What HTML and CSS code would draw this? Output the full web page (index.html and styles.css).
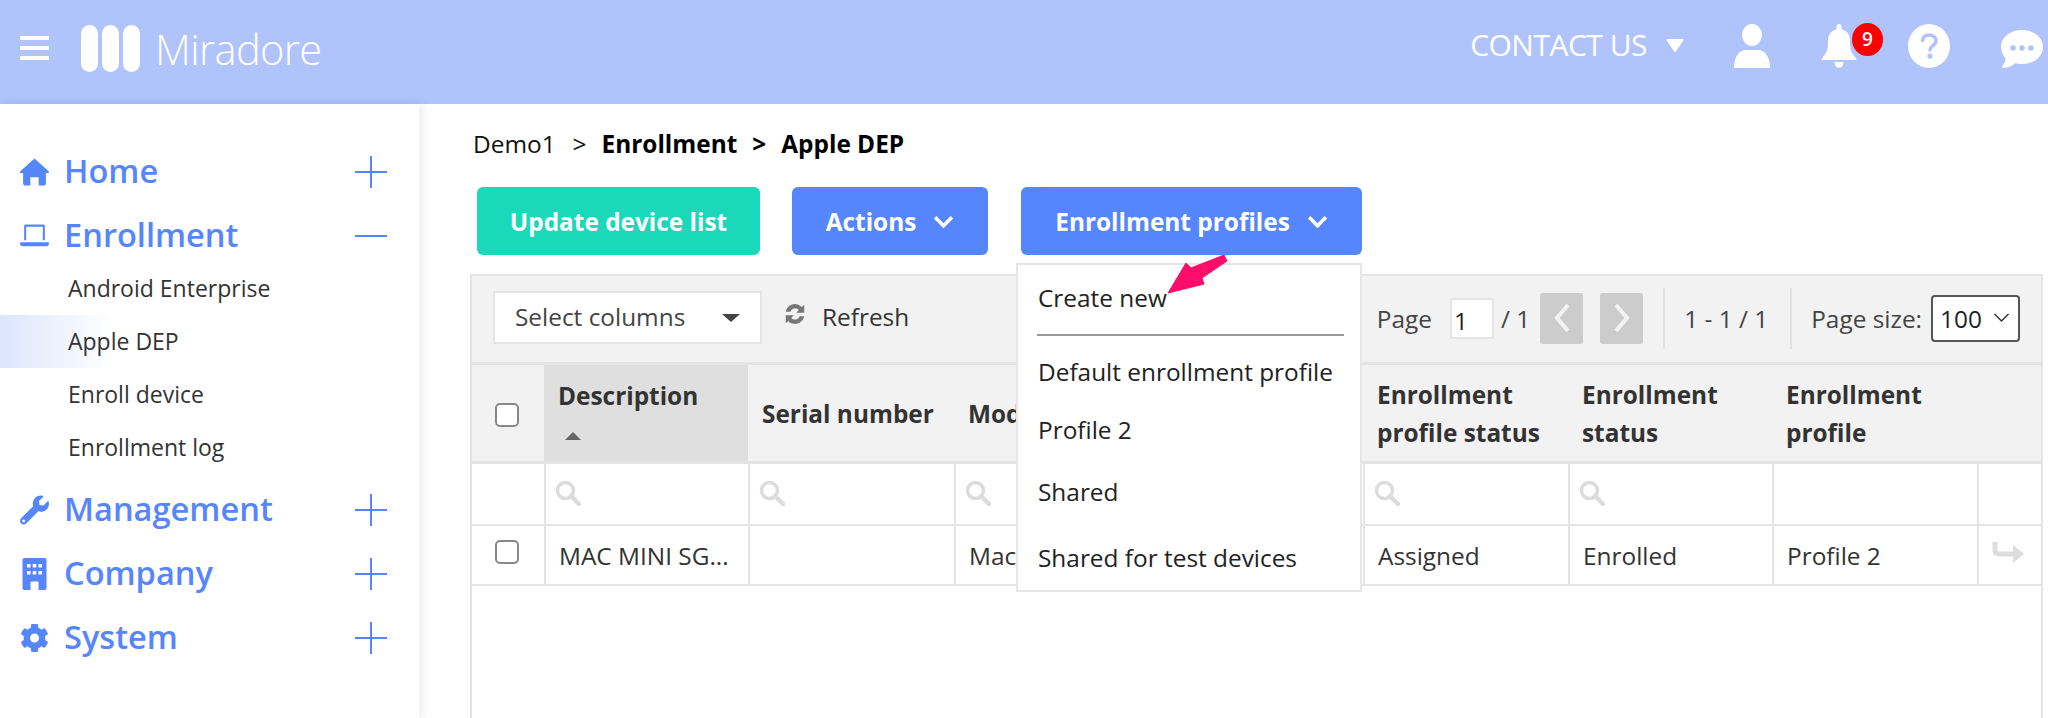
FILE: index.html
```html
<!DOCTYPE html>
<html lang="en">
<head>
<meta charset="utf-8">
<title>Miradore - Apple DEP</title>
<link rel="stylesheet" href="styles.css">
</head>
<body>
<header class="topbar">
  <div class="hamburger"><span></span><span></span><span></span></div>
  <div class="logo-mark"><span></span><span></span><span></span></div>
  <div class="logo-text">Miradore</div>
  <div class="top-right">
    <div class="contact">CONTACT US</div>
    <svg class="caret-top" viewBox="0 0 18 14"><path d="M1.500 1h15L9 12z" fill="#fff" stroke="#fff" stroke-width="2" stroke-linejoin="round"/></svg>
    <svg class="ic-user" viewBox="0 0 36 44"><ellipse cx="18" cy="11" rx="10" ry="11" fill="#fff"/><path d="M0 44c0-2 0-4 .5-6C2 31 6 26 12 26h12c6 0 10 5 11.500 12 .5 2 .5 4 .5 6z" fill="#fff"/></svg>
    <div class="bell-wrap">
      <svg class="ic-bell" viewBox="0 0 36 44"><path d="M18 0c1.500 0 2.500 1 2.500 2.500v2.700C26 6.500 29 11 29 17c0 8 1 11 3.500 14 1 1.200 3 3.500 3 5H.5c0-1.500 2-3.800 3-5C6 28 7 25 7 17 7 11 10 6.500 15.500 5.200V2.500C15.500 1 16.500 0 18 0zM13.500 38h9c0 3-2 6-4.500 6s-4.500-3-4.500-6z" fill="#fff"/></svg>
      <span class="badge">9</span>
    </div>
    <svg class="ic-help" viewBox="0 0 42 44"><ellipse cx="21" cy="22" rx="21" ry="22" fill="#fff"/><path d="M14.500 16.500c.5-3.500 3-5.500 6.500-5.500 4 0 7 2.300 7 5.700 0 4.800-6 5-6 9.300" fill="none" stroke="#b0c4fb" stroke-width="3.500" stroke-linecap="round"/><circle cx="22" cy="32" r="2.600" fill="#b0c4fb"/></svg>
    <svg class="ic-chat" viewBox="0 0 42 38"><path d="M21 0c11.500 0 21 7 21 17s-9.500 17-21 17c-2.500 0-4.500-.3-6.500-1C12 35.500 7 38 2 38c-1 0-1.300-.8-.8-1.500C3 34 4.500 31 4.600 28.500 1.800 25.500 0 21.500 0 17 0 7 9.500 0 21 0z" fill="#fff"/><circle cx="12" cy="18" r="2.800" fill="#b0c4fb"/><circle cx="21" cy="18" r="2.800" fill="#b0c4fb"/><circle cx="30" cy="18" r="2.800" fill="#b0c4fb"/></svg>
  </div>
</header>

<div class="layout">
  <nav class="sidebar">
    <div class="nav-head">
      <svg class="nav-icon" viewBox="0 0 28 26"><path d="M14 0l13.700 12.300c.6.600.2 1.700-.7 1.700h-2v10c0 1.200-.8 2-2 2h-5v-8h-8v8H5c-1.200 0-2-.8-2-2V14H1c-.9 0-1.300-1.100-.7-1.700z"/></svg>
      <span class="nav-label">Home</span>
      <svg class="nav-toggle" viewBox="0 0 32 32"><path d="M0 16h32M16 0v32"/></svg>
    </div>
    <div class="nav-head">
      <svg class="nav-icon" viewBox="0 0 28 24"><path d="M4 2.500c0-1 .5-1.500 1.500-1.500h17c1 0 1.500.5 1.500 1.500V16h-2V3H6v13H4z"/><path d="M1 18h26c.6 0 1 .4 1 1 0 2-1 3-3 3H3c-2 0-3-1-3-3 0-.6.4-1 1-1z"/></svg>
      <span class="nav-label">Enrollment</span>
      <svg class="nav-toggle" viewBox="0 0 32 32"><path d="M0 16h32"/></svg>
    </div>
    <div class="nav-subs">
      <div class="nav-sub">Android Enterprise</div>
      <div class="nav-sub nav-sub-active">Apple DEP</div>
      <div class="nav-sub">Enroll device</div>
      <div class="nav-sub">Enrollment log</div>
    </div>
    <div class="nav-head">
      <svg class="nav-icon" viewBox="0 0 512 512"><path d="M507.730 109.100c-2.240-9.030-13.540-12.090-20.120-5.510l-74.360 74.360-67.880-11.310-11.310-67.880 74.360-74.360c6.620-6.620 3.430-17.900-5.660-20.160-47.380-11.740-99.550.91-136.580 37.930-39.640 39.640-50.550 97.100-34.050 147.200L18.740 402.760c-24.990 24.990-24.990 65.510 0 90.500 24.990 24.990 65.510 24.990 90.500 0l213.210-213.210c50.120 16.710 107.470 5.680 147.370-34.220 37.070-37.070 49.700-89.320 37.910-136.730zM64 472c-13.250 0-24-10.750-24-24 0-13.260 10.750-24 24-24s24 10.740 24 24c0 13.250-10.750 24-24 24z"/></svg>
      <span class="nav-label">Management</span>
      <svg class="nav-toggle" viewBox="0 0 32 32"><path d="M0 16h32M16 0v32"/></svg>
    </div>
    <div class="nav-head">
      <svg class="nav-icon" viewBox="0 0 24 32"><path fill-rule="evenodd" d="M2 0h20c1.200 0 2 .8 2 2v28c0 1.200-.8 2-2 2h-6v-7c0-1-.5-1.500-1.500-1.500h-5C8.500 23.500 8 24 8 25v7H2c-1.200 0-2-.8-2-2V2C0 .8.800 0 2 0zM4.500 6v3.500H8V6zm5.700 0v3.500h3.600V6zM16 6v3.500h3.500V6zM4.500 13v3.500H8V13zm5.700 0v3.500h3.600V13zM16 13v3.500h3.500V13z"/></svg>
      <span class="nav-label">Company</span>
      <svg class="nav-toggle" viewBox="0 0 32 32"><path d="M0 16h32M16 0v32"/></svg>
    </div>
    <div class="nav-head">
      <svg class="nav-icon" viewBox="0 0 512 512"><path d="M487.400 315.700l-42.600-24.600c4.300-23.200 4.300-47 0-70.200l42.600-24.600c4.900-2.800 7.100-8.600 5.500-14-11.100-35.600-30-67.800-54.700-94.600-3.800-4.100-10-5.100-14.800-2.300L380.800 110c-17.900-15.400-38.500-27.300-60.800-35.100V25.800c0-5.600-3.900-10.500-9.400-11.700-36.700-8.200-74.300-7.800-109.200 0-5.500 1.200-9.400 6.100-9.400 11.700V75c-22.200 7.900-42.800 19.800-60.800 35.100L88.700 85.500c-4.900-2.800-11-1.900-14.800 2.300-24.700 26.700-43.600 58.900-54.700 94.600-1.700 5.400.6 11.200 5.500 14L67.300 221c-4.300 23.200-4.300 47 0 70.200l-42.600 24.600c-4.900 2.800-7.100 8.600-5.500 14 11.100 35.600 30 67.800 54.700 94.600 3.800 4.100 10 5.100 14.800 2.300l42.600-24.600c17.900 15.400 38.500 27.300 60.800 35.100v49.200c0 5.600 3.900 10.500 9.400 11.700 36.700 8.200 74.300 7.800 109.200 0 5.500-1.200 9.400-6.100 9.400-11.700v-49.200c22.200-7.900 42.800-19.800 60.800-35.100l42.600 24.600c4.900 2.800 11 1.900 14.800-2.300 24.700-26.700 43.600-58.900 54.700-94.600 1.500-5.500-.7-11.300-5.600-14.100zM256 336c-44.100 0-80-35.900-80-80s35.900-80 80-80 80 35.900 80 80-35.900 80-80 80z"/></svg>
      <span class="nav-label">System</span>
      <svg class="nav-toggle" viewBox="0 0 32 32"><path d="M0 16h32M16 0v32"/></svg>
    </div>
  </nav>

  <main class="main">
    <div class="crumbs">
      <span>Demo1</span><span class="crumb-sep crumb-sep-first">&gt;</span><b>Enrollment</b><b class="crumb-sep">&gt;</b><b>Apple DEP</b>
    </div>
    <div class="actions">
      <button class="btn btn-green">Update device list</button>
      <button class="btn btn-blue btn-actions">Actions
        <svg class="chev" viewBox="0 0 20 12"><path d="M2 2l8 8 8-8"/></svg>
      </button>
      <div class="dropdown-wrap">
        <button class="btn btn-blue btn-profiles">Enrollment profiles
          <svg class="chev" viewBox="0 0 20 12"><path d="M2 2l8 8 8-8"/></svg>
        </button>
        <div class="menu">
          <div class="menu-create">Create new</div>
          <div class="menu-rule"></div>
          <div class="menu-item menu-default">Default enrollment profile</div>
          <div class="menu-item menu-p2">Profile 2</div>
          <div class="menu-item menu-shared">Shared</div>
          <div class="menu-item menu-test">Shared for test devices</div>
        </div>
        <svg class="pointer" viewBox="0 0 62 40"><path d="M58 1l3 6-25 17 2 6L2 39l18-30 5 5z" fill="#ff0d6a" stroke="#ff0d6a" stroke-width="1"/></svg>
      </div>
    </div>

    <section class="grid-frame">
      <div class="toolbar">
        <div class="col-select"><span>Select columns</span><i class="select-caret"></i></div>
        <svg class="ic-refresh" viewBox="2 1.500 18 19"><path d="M3 9C4 4.500 8 2 12 2.500c2 .3 3.500 1 4.800 2.500L19 3v7h-7l2.300-2.500C13 6.300 11.500 6 10 6.300 8.500 6.600 7.500 7.800 7 9zM19 13c-1 4.500-5 7-9 6.500-2-.3-3.500-1-4.800-2.500L3 19v-7h7l-2.300 2.500c1.300 1.200 2.800 1.500 4.300 1.200 1.500-.3 2.500-1.500 3-2.700z" fill="#777"/></svg>
        <span class="refresh">Refresh</span>
        <div class="pager">
          <span>Page</span>
          <span class="page-input">1</span>
          <span>/ 1</span>
          <span class="page-btn page-prev"><svg viewBox="0 0 20 32"><path d="M16 3L5 16l11 13"/></svg></span>
          <span class="page-btn page-next"><svg viewBox="0 0 20 32"><path d="M4 3l11 13L4 29"/></svg></span>
          <span class="sep"></span>
          <span class="page-count">1 - 1 / 1</span>
          <span class="sep"></span>
          <span class="size-label">Page size:</span>
          <span class="size-select">100<svg viewBox="0 0 16 10"><path d="M1 1l7 7 7-7"/></svg></span>
        </div>
      </div>
      <table class="grid">
        <colgroup>
          <col class="c-check"><col class="c-204"><col class="c-206"><col class="c-204"><col class="c-205"><col class="c-205"><col class="c-204"><col class="c-205"><col class="c-last">
        </colgroup>
        <thead>
          <tr>
            <th class="cell-check"><span class="checkbox"></span></th>
            <th class="sorted">Description<i class="sort-up"></i></th>
            <th>Serial number</th>
            <th>Model</th>
            <th></th>
            <th>Enrollment profile status</th>
            <th>Enrollment status</th>
            <th>Enrollment profile</th>
            <th></th>
          </tr>
        </thead>
        <tbody>
          <tr class="filters">
            <td></td>
            <td><svg class="lens" viewBox="0 0 26 26"><use href="#lens"/></svg></td>
            <td><svg class="lens" viewBox="0 0 26 26"><use href="#lens"/></svg></td>
            <td><svg class="lens" viewBox="0 0 26 26"><use href="#lens"/></svg></td>
            <td><svg class="lens" viewBox="0 0 26 26"><use href="#lens"/></svg></td>
            <td><svg class="lens" viewBox="0 0 26 26"><use href="#lens"/></svg></td>
            <td><svg class="lens" viewBox="0 0 26 26"><use href="#lens"/></svg></td>
            <td></td>
            <td></td>
          </tr>
          <tr class="row">
            <td class="cell-check"><span class="checkbox checkbox-row"></span></td>
            <td>MAC MINI SG...</td>
            <td></td>
            <td>Mac</td>
            <td></td>
            <td>Assigned</td>
            <td>Enrolled</td>
            <td>Profile 2</td>
            <td><svg class="ic-forward" viewBox="0 0 32 22"><path d="M3 0v8c0 3 1.500 4 4 4h16" fill="none" stroke="#ddd" stroke-width="5"/><path d="M21 3l11 9-11 9z" fill="#ddd"/></svg></td>
          </tr>
        </tbody>
      </table>
      <svg class="defs" width="0" height="0"><defs><g id="lens"><circle cx="10.500" cy="10.500" r="8" fill="none" stroke="#dcdcdc" stroke-width="3.500"/><path d="M16 16l8 8" stroke="#dcdcdc" stroke-width="4.500" stroke-linecap="round"/></g></defs></svg>
    </section>
  </main>
</div>
</body>
</html>
```
FILE: styles.css
```css
* { box-sizing: border-box; }
html, body { margin: 0; height: 718px; overflow: hidden; background: #fff; }
body { font-family: "Open Sans", "Liberation Sans", sans-serif; font-size: 24.4px; color: #333; }

.topbar { height: 104px; background: #b0c4fb; display: flex; align-items: center; color: #fff; position: relative; }
.hamburger { margin-left: 20px; width: 29px; display: flex; flex-direction: column; gap: 6px; margin-top: -8px; }
.hamburger span { display: block; height: 4px; background: #fff; }
.logo-mark { margin-left: 32px; display: flex; gap: 4px; margin-top: -8px; }
.logo-mark span { display: block; width: 17px; height: 47px; border-radius: 9px; background: #fff; }
.logo-text { margin-left: 15px; font-weight: 300; font-size: 41.5px; letter-spacing: -0.6px; line-height: 1; margin-top: -5px; }
.top-right { margin-left: auto; display: flex; align-items: center; padding-right: 5px; }
.contact { font-size: 30px; font-weight: 500; letter-spacing: -0.5px; margin-top: -16px; }
.caret-top { width: 18px; height: 14px; margin: -12px 0 0 19px; }
.ic-user { width: 36px; height: 44px; margin: -12px 0 0 50px; }
.bell-wrap { position: relative; width: 36px; height: 44px; margin: -12px 0 0 51px; }
.ic-bell { width: 36px; height: 44px; display: block; }
.badge { position: absolute; left: 31px; top: -1px; width: 31px; height: 33px; border-radius: 50%; background: #f00; color: #fff; font-size: 19px; font-weight: 600; text-align: center; line-height: 32px; }
.ic-help { width: 42px; height: 44px; margin: -12px 0 0 51px; }
.ic-chat { width: 42px; height: 38px; margin: -6px 0 0 51px; }

.layout { display: flex; height: 614px; }
.sidebar { width: 419px; flex: none; padding-top: 36px; background: #fff; box-shadow: 2px 0 10px rgba(0,0,0,.1); position: relative; }
.nav-head { height: 64px; display: flex; align-items: center; padding-left: 20px; color: #5686fe; }
.nav-icon { width: 29px; height: 32px; fill: #5686fe; flex: none; }
.nav-label { margin: -3px 0 0 15px; font-size: 32.6px; font-weight: 600; }
.nav-toggle { width: 32px; height: 32px; margin-left: auto; margin-right: 32px; fill: none; stroke: #5686fe; stroke-width: 2; flex: none; }
.nav-subs { margin: -6px 0 4px; }
.nav-sub { height: 53px; line-height: 52px; padding-left: 68px; font-size: 23px; color: #333; }
.nav-sub-active { background: linear-gradient(90deg, #dbe5fd 0, #fff 112px); }

.main { flex: 1; min-width: 0; padding: 0 5px 0 51px; }
.crumbs { height: 83px; padding: 23px 0 0 3px; line-height: 34px; color: #111; display: flex; }
.crumbs b { font-weight: 700; color: #000; }
.crumb-sep { margin: 0 15px; }
.crumb-sep-first { margin-left: 17px; }
.actions { height: 68px; margin-left: 7px; display: flex; gap: 32px; }
.btn { height: 68px; border: 0; border-radius: 6px; color: #fff; font: 700 24.4px "Open Sans", sans-serif; padding: 0; display: flex; align-items: center; justify-content: center; }
.btn-green { width: 283px; background: #1ad8b9; }
.btn-blue { background: #5686fe; }
.btn-actions { width: 196px; }
.btn-profiles { width: 341px; margin-left: 1px; }
.chev { width: 21px; height: 13px; margin-left: 17px; fill: none; stroke: #fff; stroke-width: 3.5; }
.dropdown-wrap { position: relative; }
.menu { position: absolute; left: -4px; top: 76px; width: 346px; height: 329px; background: #fff; border: 2px solid #e6e6e6; padding: 0 16px 0 20px; z-index: 3; color: #222; }
.menu-create { height: 69px; padding-top: 15px; line-height: 36px; }
.menu-rule { height: 2px; background: #999; margin-left: -1px; }
.menu-item { height: 36px; line-height: 36px; white-space: nowrap; }
.menu-default { margin-top: 18px; }
.menu-p2 { margin-top: 22px; }
.menu-shared { margin-top: 26px; }
.menu-test { margin-top: 30px; }
.pointer { position: absolute; left: 146px; top: 67px; width: 62px; height: 40px; z-index: 4; }

.grid-frame { margin-top: 19px; height: 444px; border: solid #e4e4e4; border-width: 2px 2px 0; }
.toolbar { height: 89px; background: #f2f2f2; border-bottom: 3px solid #e4e4e4; display: flex; align-items: center; padding-left: 21px; }
.col-select { width: 269px; height: 53px; background: #fff; border: 2px solid #e4e4e4; display: flex; align-items: center; padding: 0 0 3px 20px; color: #444; margin-top: -3px; }
.select-caret { margin: 4px 20px 0 auto; width: 0; height: 0; border: 9px solid transparent; border-top: 8px solid #444; border-bottom: 0; }
.ic-refresh { width: 22px; height: 22px; margin: -11px 0 0 22px; }
.refresh { margin: -6px 0 0 16px; color: #333; }
.pager { margin-left: auto; padding-right: 21px; display: flex; align-items: center; color: #444; margin-top: -2px; }
.page-input { width: 44px; height: 41px; margin: 0 7px 0 18px; background: #fff; border: 2px solid #e4e4e4; line-height: 42px; padding-left: 2px; color: #222; }
.page-btn { width: 43px; height: 51px; border-radius: 3px; background: #ccc; display: flex; align-items: center; justify-content: center; margin-left: 10px; }
.page-next { margin: 0 20px 0 17px; }
.page-btn svg { width: 20px; height: 32px; fill: none; stroke: #f2f2f2; stroke-width: 4; }
.sep { width: 2px; height: 61px; background: #e2e2e2; }
.page-count { margin: 0 22px 0 19px; }
.size-label { margin-left: 19px; }
.size-select { width: 89px; height: 47px; margin-left: 9px; border: 2px solid #555; border-radius: 4px; background: #fff; color: #222; display: flex; align-items: center; padding-left: 7px; }
.size-select svg { width: 17px; height: 10px; margin-left: 11px; fill: none; stroke: #333; stroke-width: 1.500; }

.grid { width: 1569px; table-layout: fixed; border-collapse: separate; border-spacing: 0; }
.c-check { width: 72px; } .c-204 { width: 204px; } .c-206 { width: 206px; } .c-205 { width: 205px; } .c-last { width: 64px; }
th { height: 99px; background: #f2f2f2; border-bottom: 3px solid #e4e4e4; font-weight: 700; font-size: 24.4px; line-height: 38px; text-align: left; padding: 2px 14px 0; color: #333; }
th.sorted { background: #dfdfdf; vertical-align: top; padding-top: 12px; }
th.cell-check, td.cell-check { padding: 0 0 0 23px; }
th.cell-check { padding-top: 4px; }
.sort-up { display: block; width: 0; height: 0; margin: 17px 0 0 7px; border: 8px solid transparent; border-bottom: 8px solid #666; border-top: 0; }
.checkbox { display: block; width: 24px; height: 24px; background: #fff; border: 2px solid #888; border-radius: 5px; }
.checkbox-row { margin-top: -6px; }
td { border-left: 2px solid #e4e4e4; border-bottom: 2px solid #e4e4e4; padding: 0 0 0 13px; white-space: nowrap; overflow: hidden; }
td:first-child { border-left: 0; }
.filters td { height: 62px; padding-left: 9px; }
.row td { height: 60px; color: #333; }
.lens { width: 26px; height: 26px; display: block; margin-top: -2px; }
.ic-forward { width: 32px; height: 22px; display: block; margin-top: -4px; }
.defs { position: absolute; }
```
